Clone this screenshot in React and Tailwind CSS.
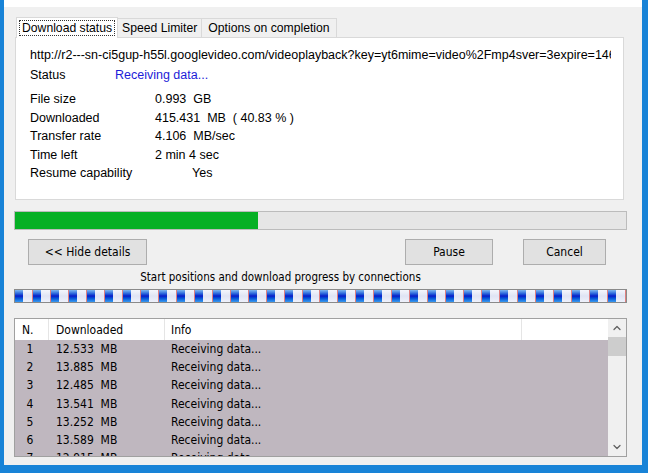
import { ChevronUp, ChevronDown } from 'lucide-react'

const details = [
  { label: 'File size', value: '0.993  GB' },
  { label: 'Downloaded', value: '415.431  MB  ( 40.83 % )' },
  { label: 'Transfer rate', value: '4.106  MB/sec' },
  { label: 'Time left', value: '2 min 4 sec' },
]

const connections = [
  ['1', '12.533'],
  ['2', '13.885'],
  ['3', '12.485'],
  ['4', '13.541'],
  ['5', '13.252'],
  ['6', '13.589'],
  ['7', '12.915'],
]

const segments = Array.from({ length: 34 }, (_, i) => i)

function Button({ children, className }) {
  return (
    <button className={`h-[26px] bg-[#e1e1e1] border border-[#adadad] text-[12px] text-black ${className}`}>
      {children}
    </button>
  )
}

export default function App() {
  return (
    <div className="w-[648px] h-[473px] bg-[#1883d7] pl-[4px] pr-[6px] pb-[8px] flex overflow-hidden font-['Liberation_Sans',sans-serif]">
      <div className="flex-1 min-w-0 flex flex-col bg-[#f0f0f0]">
        <div className="h-[7px] bg-white" />

        <div className="pl-[10px] pr-[15px] pt-[9px] flex flex-col min-w-0">
          {/* Tabs */}
          <div className="flex items-end h-[21px] pl-[2px] text-[12.2px] text-black">
            <div className="h-[21px] bg-white border border-b-0 border-[#d9d9d9] px-[2px] pt-[2px] relative z-10 -mb-px">
              <div className="border border-dotted border-[#333] px-[2px] h-[16px] flex items-center">
                Download status
              </div>
            </div>
            <div className="h-[19px] border border-b-0 border-l-0 border-[#d9d9d9] px-[4px] flex items-center">
              Speed Limiter
            </div>
            <div className="h-[19px] border border-b-0 border-l-0 border-[#d9d9d9] px-[6px] flex items-center">
              Options on completion
            </div>
          </div>

          {/* Panel */}
          <div className="h-[163px] min-w-0 ml-[1px] mr-[3px] bg-white border border-[#d9d9d9] pl-[14px] pt-[9px] text-[12.5px] text-black overflow-hidden">
            <div className="whitespace-nowrap overflow-hidden h-[16px] leading-[16px] mr-[12px]">
              http://r2---sn-ci5gup-h55l.googlevideo.com/videoplayback?key=yt6mime=video%2Fmp4sver=3expire=1462
            </div>
            <div className="flex h-[16px] leading-[16px] mt-[4px]">
              <span className="w-[85px]">Status</span>
              <span className="text-[#1c1cd8]">Receiving data...</span>
            </div>
            <div className="mt-[7px] flex flex-col">
              {details.map((d) => (
                <div key={d.label} className="flex h-[18.5px] leading-[18px] whitespace-pre">
                  <span className="w-[125px]">{d.label}</span>
                  <span>{d.value}</span>
                </div>
              ))}
              <div className="flex h-[18.5px] leading-[18px]">
                <span className="w-[162px]">Resume capability</span>
                <span>Yes</span>
              </div>
            </div>
          </div>

          {/* Progress */}
          <div className="mt-[11px] h-[19px] bg-[#e6e6e6] border border-[#bcbcbc] flex">
            <div className="w-[243px] bg-[#06b025]" />
          </div>

          {/* Buttons */}
          <div className="mt-[9px] flex items-center font-['DejaVu_Sans_Condensed',sans-serif]">
            <Button className="ml-[14px] w-[119px]">&lt;&lt; Hide details</Button>
            <Button className="ml-auto w-[88px]">Pause</Button>
            <Button className="ml-[30px] mr-[21px] w-[83px]">Cancel</Button>
          </div>

          <div className="mt-[4px] h-[16px] leading-[16px] text-center text-[11.5px] text-black pr-[80px] font-['DejaVu_Sans_Condensed',sans-serif]">
            Start positions and download progress by connections
          </div>

          {/* Connection segments */}
          <div className="mt-[4px] h-[14px] border border-[#8a8a8a] flex overflow-hidden">
            {segments.map((i) => (
              <div key={i} className="flex-1 flex border-r border-[#e08080]">
                <div className="w-[8px] bg-linear-to-b from-[#7fb8f0] via-[#1010c8] to-[#3a9af0]" />
                <div className="flex-1 bg-linear-to-b from-[#f4f6fc] via-[#dfe4f4] to-[#eef1fb]" />
              </div>
            ))}
          </div>

          {/* Table */}
          <div className="mt-[15px] h-[139px] border border-[#a0a0a0] flex overflow-hidden font-['DejaVu_Sans_Condensed',sans-serif] text-[12px] text-black">
            <div className="flex-1 flex flex-col">
              <div className="h-[21px] bg-white flex items-center shrink-0">
                <div className="w-[34px] pl-[7px] h-full flex items-center border-r border-[#e5e5e5]">N.</div>
                <div className="w-[116px] pl-[7px] h-full flex items-center border-r border-[#e5e5e5]">Downloaded</div>
                <div className="w-[357px] pl-[6px] h-full flex items-center border-r border-[#e5e5e5]">Info</div>
                <div className="flex-1" />
              </div>
              <div className="flex-1 bg-[#bfb7bf]">
                {connections.map(([n, mb]) => (
                  <div key={n} className="flex h-[18.2px] items-center whitespace-pre">
                    <span className="w-[34px] text-center pr-[4px]">{n}</span>
                    <span className="w-[116px] pl-[7px]">{mb}  MB</span>
                    <span className="pl-[6px]">Receiving data...</span>
                  </div>
                ))}
              </div>
            </div>
            <div className="w-[18px] bg-[#f0f0f0] flex flex-col items-center">
              <ChevronUp className="w-[12px] h-[12px] mt-[3px] text-[#606060]" strokeWidth={2.5} />
              <div className="w-full h-[19px] bg-[#cdcdcd] mt-[3px]" />
              <div className="flex-1" />
              <ChevronDown className="w-[12px] h-[12px] mb-[3px] text-[#606060]" strokeWidth={2.5} />
            </div>
          </div>
        </div>
      </div>
    </div>
  )
}
